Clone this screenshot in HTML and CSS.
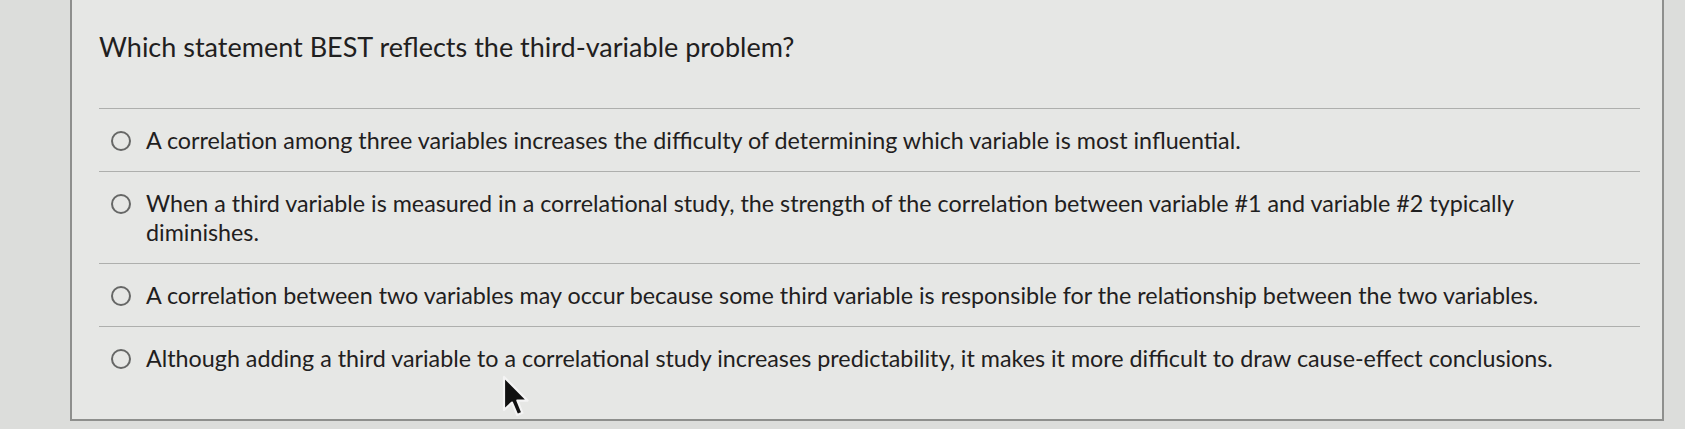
FILE: index.html
```html
<!DOCTYPE html>
<html lang="en">
<head>
<meta charset="utf-8">
<title>Question</title>
<link rel="stylesheet" href="styles.css">
</head>
<body>
<div class="page">
  <div class="card">
    <h1 class="question">Which statement BEST reflects the third-variable problem?</h1>
    <ul class="options">
      <li class="option"><span class="radio"></span><span class="label">A correlation among three variables increases the difficulty of determining which variable is most influential.</span></li>
      <li class="option"><span class="radio"></span><span class="label">When a third variable is measured in a correlational study, the strength of the correlation between variable #1 and variable #2 typically diminishes.</span></li>
      <li class="option"><span class="radio"></span><span class="label">A correlation between two variables may occur because some third variable is responsible for the relationship between the two variables.</span></li>
      <li class="option"><span class="radio"></span><span class="label">Although adding a third variable to a correlational study increases predictability, it makes it more difficult to draw cause-effect conclusions.</span></li>
    </ul>
  </div>
  <svg class="cursor" width="30" height="44" viewBox="0 0 15 22">
    <path d="M1 1 L1 17.5 L5 13.8 L7.6 20 L10.2 18.9 L7.7 12.8 L12.8 12.8 Z" fill="#111" stroke="#f4f4f4" stroke-width="1.1" stroke-linejoin="round"/>
  </svg>
</div>
</body>
</html>
```
FILE: styles.css
```css
html, body {
  margin: 0;
  padding: 0;
}
body {
  background: #dcdddb;
  font-family: Lato, "Open Sans", sans-serif;
  color: #1f2020;
  width: 1685px;
  height: 429px;
  overflow: hidden;
}
.page {
  position: relative;
  width: 1685px;
  height: 429px;
}
.card {
  margin-left: 70px;
  width: 1594px;
  height: 421px;
  box-sizing: border-box;
  background: #e6e7e5;
  border-left: 2px solid #8e8f8d;
  border-right: 2px solid #8e8f8d;
  border-bottom: 2px solid #8e8f8d;
  padding: 30px 22px 0 27px;
}
.question {
  margin: 0;
  font-size: 27px;
  line-height: 34px;
  font-weight: 400;
  color: #1f2020;
  padding-bottom: 44px;
}
.options {
  list-style: none;
  margin: 0;
  padding: 0;
}
.option {
  display: flex;
  align-items: flex-start;
  border-top: 1.5px solid #aeafad;
  padding: 16.5px 0 16.5px 12px;
  font-size: 23.3px;
  line-height: 29px;
}
.radio {
  flex: none;
  width: 16px;
  height: 16px;
  border: 2px solid #666766;
  border-radius: 50%;
  margin-top: 5px;
  margin-right: 15px;
}
.label {
  flex: 1;
  padding-right: 30px;
}
.cursor {
  position: absolute;
  left: 502px;
  top: 375px;
}
```
